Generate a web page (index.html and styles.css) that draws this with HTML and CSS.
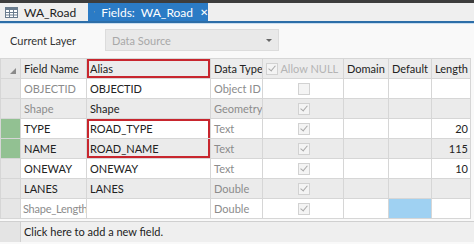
FILE: index.html
```html
<!DOCTYPE html>
<html lang="en">
<head>
    <meta charset="UTF-8">
    <title>Fields: WA_Road</title>
    <link rel="stylesheet" href="styles.css">
</head>
<body>
    <div class="topbar"></div>

    <div class="tabs">
        <div class="tab">
            <svg class="tab-icon" width="13" height="11" viewBox="0 0 13 11">
                <rect x="0.5" y="0.5" width="12" height="10" fill="#fff" stroke="#6a7c8e"/>
                <rect x="0.5" y="0.5" width="12" height="2.5" fill="#6a7c8e"/>
                <path d="M0.5 5.5H12.5M0.5 8H12.5M4.5 3V10.5M8.5 3V10.5" stroke="#6a7c8e" stroke-width="1"/>
            </svg>
            <span>WA_Road</span>
        </div>
        <div class="tab active">
            <svg class="tab-icon" width="13" height="12" viewBox="0 0 13 12">
                <rect x="0" y="0" width="4" height="3" fill="#fff"/>
                <rect x="0" y="4" width="4" height="3" fill="#fff"/>
                <rect x="5" y="4" width="4" height="3" fill="#f5b73b"/>
                <rect x="5" y="8" width="4" height="3" fill="#f5b73b"/>
                <rect x="9" y="8" width="4" height="3" fill="#f5b73b"/>
                <rect x="5" y="0" width="4" height="3" fill="#dfe9f3"/>
            </svg>
            <span>Fields:&nbsp; WA_Road</span>
            <span class="close">&#x2715;</span>
        </div>
    </div>

    <div class="layer-row">
        <span class="layer-label">Current Layer</span>
        <div class="dropdown">
            <span>Data Source</span>
            <span class="caret"></span>
        </div>
    </div>

    <table class="fields">
        <colgroup>
            <col style="width:20px">
            <col style="width:66px">
            <col style="width:124px">
            <col style="width:52px">
            <col style="width:81px">
            <col style="width:45px">
            <col style="width:43px">
            <col style="width:39px">
        </colgroup>
        <thead>
            <tr>
                <th class="corner"><span class="sort"></span></th>
                <th>Field Name</th>
                <th class="marked">Alias</th>
                <th>Data Type</th>
                <th class="muted"><span class="check on"></span> Allow NULL</th>
                <th>Domain</th>
                <th>Default</th>
                <th>Length</th>
            </tr>
        </thead>
        <tbody>
            <tr>
                <td class="rh"></td>
                <td class="muted">OBJECTID</td>
                <td>OBJECTID</td>
                <td class="muted">Object ID</td>
                <td class="center"><span class="check"></span></td>
                <td></td><td></td><td></td>
            </tr>
            <tr class="alt">
                <td class="rh"></td>
                <td class="muted">Shape</td>
                <td>Shape</td>
                <td class="muted">Geometry</td>
                <td class="center"><span class="check on"></span></td>
                <td></td><td></td><td></td>
            </tr>
            <tr>
                <td class="rh new"></td>
                <td>TYPE</td>
                <td class="marked top">ROAD_TYPE</td>
                <td class="muted">Text</td>
                <td class="center"><span class="check on"></span></td>
                <td></td><td></td>
                <td class="num">20</td>
            </tr>
            <tr class="alt">
                <td class="rh new"></td>
                <td>NAME</td>
                <td class="marked bottom">ROAD_NAME</td>
                <td class="muted">Text</td>
                <td class="center"><span class="check on"></span></td>
                <td></td><td></td>
                <td class="num">115</td>
            </tr>
            <tr>
                <td class="rh"></td>
                <td>ONEWAY</td>
                <td>ONEWAY</td>
                <td class="muted">Text</td>
                <td class="center"><span class="check on"></span></td>
                <td></td><td></td>
                <td class="num">10</td>
            </tr>
            <tr class="alt">
                <td class="rh"></td>
                <td>LANES</td>
                <td>LANES</td>
                <td class="muted">Double</td>
                <td class="center"><span class="check on"></span></td>
                <td></td><td></td><td></td>
            </tr>
            <tr>
                <td class="rh"></td>
                <td class="muted tight">Shape_Length</td>
                <td></td>
                <td class="muted">Double</td>
                <td class="center"><span class="check on"></span></td>
                <td></td>
                <td class="selected"></td>
                <td></td>
            </tr>
        </tbody>
    </table>

    <div class="new-row">
        <div class="new-rh"></div>
        <div class="new-text">Click here to add a new field.</div>
    </div>
</body>
</html>
```

FILE: styles.css
```css
body {
    margin: 0;
    width: 474px;
    height: 244px;
    overflow: hidden;
    background-color: #f9f9f9;
    font-family: Lato, "Noto Sans", sans-serif;
    font-size: 11px;
    color: #222;
}

.topbar {
    height: 3px;
    background-color: #3d3d3d;
}

/* tab strip */
.tabs {
    display: flex;
    height: 18px;
    background-color: #efefef;
    border-bottom: 2px solid #2d6ea8;
    box-shadow: 0 1px 0 #c9def0;
}

.tab {
    display: flex;
    align-items: center;
    gap: 6px;
    padding: 0 0 0 5px;
    width: 81px;
    font-size: 12px;
    white-space: nowrap;
    color: #222;
}

.tab.active {
    width: 114px;
    margin-left: 2px;
    padding-left: 6px;
    background-color: #2b7bc5;
    color: #fff;
}

.tab .close {
    margin-left: 1px;
    font-size: 10px;
}

/* current layer */
.layer-row {
    display: flex;
    align-items: center;
    height: 34px;
    padding-left: 10px;
}

.layer-label {
    width: 95px;
    color: #333;
}

.dropdown {
    display: flex;
    align-items: center;
    justify-content: space-between;
    width: 160px;
    height: 20px;
    padding: 0 6px;
    background-color: #e9e9e9;
    border: 1px solid #dcdcdc;
    color: #a8a8a8;
}

.caret {
    width: 0;
    height: 0;
    border-left: 3px solid transparent;
    border-right: 3px solid transparent;
    border-top: 3px solid #666;
}

/* fields grid */
.fields {
    table-layout: fixed;
    width: 470px;
    border-collapse: collapse;
    margin-top: 1px;
}

.fields th,
.fields td {
    height: 19px;
    padding: 0 2px 0 3px;
    border: 1px solid #d6d6d6;
    white-space: nowrap;
    overflow: hidden;
    text-align: left;
    font-weight: normal;
}

.fields th {
    background-color: #ececec;
    color: #222;
}

.fields td {
    background-color: #fff;
}

.fields tr.alt td {
    background-color: #ebebeb;
}

.fields .muted {
    color: #8c8c8c;
}

.fields .tight {
    padding: 0 0 0 2px;
    letter-spacing: -0.25px;
}

.fields th.muted {
    color: #b4b4b4;
}

.fields .center {
    text-align: center;
}

.fields .num {
    text-align: right;
    padding-right: 2px;
}

.fields td.rh,
.fields tr.alt td.rh,
.fields th.corner {
    background-color: #e6e6e6;
    padding: 0;
}

.fields td.rh.new,
.fields tr.alt td.rh.new {
    background-color: #92c192;
}

.fields td.selected {
    background-color: #9fd1f2;
}

.sort {
    display: inline-block;
    margin-left: 9px;
    margin-top: 6px;
    width: 0;
    height: 0;
    border-left: 6px solid transparent;
    border-bottom: 6px solid #8a8a8a;
}

/* red highlight boxes */
.fields .marked {
    box-shadow: inset 0 0 0 2px #c8262e;
}

.fields .marked.top {
    box-shadow: inset 2px 2px 0 #c8262e, inset -2px 0 0 #c8262e;
}

.fields .marked.bottom {
    box-shadow: inset 2px -2px 0 #c8262e, inset -2px 0 0 #c8262e;
}

.check {
    display: inline-block;
    position: relative;
    width: 10px;
    height: 10px;
    border: 1px solid #d2d2d2;
    background-color: #f4f4f4;
    vertical-align: -2px;
}

.check.on::after {
    content: "";
    position: absolute;
    left: 3px;
    top: 0;
    width: 3px;
    height: 6px;
    border-right: 1px solid #a9a9a9;
    border-bottom: 1px solid #a9a9a9;
    transform: rotate(40deg);
}

/* add row */
.new-row {
    display: flex;
    height: 20px;
    margin-top: 2px;
    border-top: 1px solid #d0d0d0;
}

.new-rh {
    width: 20px;
    background-color: #e4e4e4;
    border-right: 1px solid #d0d0d0;
}

.new-text {
    flex: 1;
    padding-left: 3px;
    line-height: 20px;
    background-color: #efefef;
}
```
